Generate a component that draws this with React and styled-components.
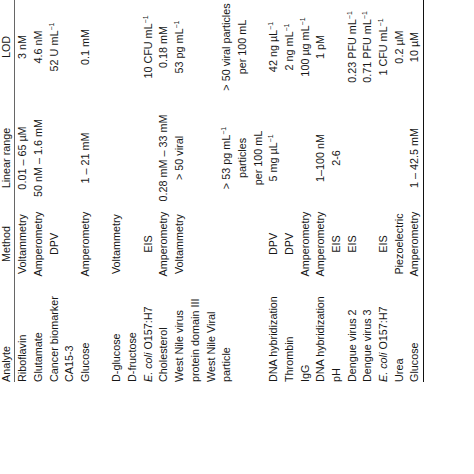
import React from 'react';
import styled, { createGlobalStyle } from 'styled-components';

const GlobalStyle = createGlobalStyle`
  html, body {
    margin: 0;
    padding: 0;
    background: #fff;
  }
  body {
    font-family: "Liberation Sans", Arial, sans-serif;
    color: #161616;
  }
`;

const Page = styled.div`
  width: 474px;
  height: 474px;
  overflow: hidden;
  background: #fff;
`;

// the whole table is printed sideways, reading bottom to top
const Sheet = styled.div`
  width: 398px;
  transform-origin: 0 0;
  transform: translate(-4px, 382px) rotate(-90deg);
  border-top: 1px solid #333;
  border-bottom: 1.5px solid #111;
  font-size: 10.8px;
  line-height: 15.7px;
`;

const Row = styled.div`
  display: grid;
  grid-template-columns: 100px 76px 96px 126px;
  height: 15.7px;
  white-space: nowrap;
`;

const HeadRow = styled(Row)`
  padding-top: 2px;
  height: 15.3px;
  border-bottom: 1px solid #666;
`;

const Cell = styled.div`
  text-align: ${(p) => (p.$center ? 'center' : 'left')};
  overflow: visible;
`;

const Sup = styled.sup`
  font-size: 7px;
  line-height: 0;
  vertical-align: 4px;
`;

const Em = styled.i`
  font-style: italic;
`;

const per = (unit) => (
  <>
    {unit}
    <Sup>−1</Sup>
  </>
);

const ecoli = (
  <>
    <Em>E. coli</Em> O157:H7
  </>
);

const rows = [
  ['Riboflavin', 'Voltammetry', '0.01 – 65 µM', '3 nM'],
  ['Glutamate', 'Amperometry', '50 nM – 1.6 mM', '4.6 nM'],
  ['Cancer biomarker', 'DPV', '', per('52 U mL')],
  ['CA15-3', '', '', ''],
  ['Glucose', 'Amperometry', '1 – 21 mM', '0.1 mM'],
  ['', '', '', ''],
  ['D-glucose', 'Voltammetry', '', ''],
  ['D-fructose', '', '', ''],
  [ecoli, 'EIS', '', per('10 CFU mL')],
  ['Cholesterol', 'Amperometry', '0.28 mM – 33 mM', '0.18 mM'],
  ['West Nile virus', 'Voltammetry', '> 50 viral', per('53 pg mL')],
  ['protein domain III', '', '', ''],
  ['West Nile Viral', '', '', ''],
  ['particle', '', per('> 53 pg mL'), '> 50 viral particles'],
  ['', '', 'particles', 'per 100 mL'],
  ['', '', 'per 100 mL', ''],
  ['DNA hybridization', 'DPV', per('5 mg µL'), per('42 ng µL')],
  ['Thrombin', 'DPV', '', per('2 ng mL')],
  ['IgG', 'Amperometry', '', per('100 µg mL')],
  ['DNA hybridization', 'Amperometry', '1–100 nM', '1 pM'],
  ['pH', 'EIS', '2-6', ''],
  ['Dengue virus 2', 'EIS', '', per('0.23 PFU mL')],
  ['Dengue virus 3', '', '', per('0.71 PFU mL')],
  [ecoli, 'EIS', '', per('1 CFU mL')],
  ['Urea', 'Piezoelectric', '', '0.2 µM'],
  ['Glucose', 'Amperometry', '1 – 42.5 mM', '10 µM'],
];

const headers = ['Analyte', 'Method', 'Linear range', 'LOD'];

const App = () => {
  return (
    <Page>
      <GlobalStyle />
      <Sheet>
        <HeadRow>
          {headers.map((h, i) => (
            <Cell key={h} $center={i > 0}>
              {h}
            </Cell>
          ))}
        </HeadRow>
        {rows.map((r, ri) => (
          <Row key={ri}>
            {r.map((c, ci) => (
              <Cell key={ci} $center={ci > 0}>
                {c}
              </Cell>
            ))}
          </Row>
        ))}
      </Sheet>
    </Page>
  );
};

export default App;
